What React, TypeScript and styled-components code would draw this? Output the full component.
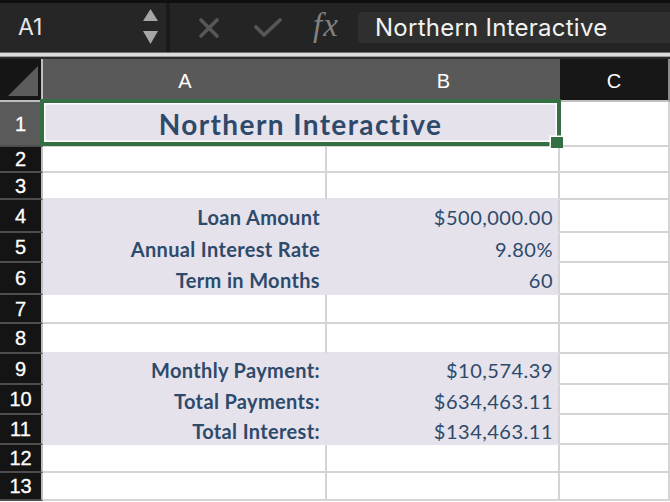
import React from "react";
import styled, { createGlobalStyle } from "styled-components";

type Row = {
  n: number;
  height: number;
  label?: string;
  value?: string;
  filled?: boolean;
};

const rows: Row[] = [
  { n: 1, height: 45, filled: true },
  { n: 2, height: 26 },
  { n: 3, height: 27 },
  { n: 4, height: 33, label: "Loan Amount", value: "$500,000.00", filled: true },
  { n: 5, height: 30, label: "Annual Interest Rate", value: "9.80%", filled: true },
  { n: 6, height: 32, label: "Term in Months", value: "60", filled: true },
  { n: 7, height: 29 },
  { n: 8, height: 30 },
  { n: 9, height: 31, label: "Monthly Payment:", value: "$10,574.39", filled: true },
  { n: 10, height: 30, label: "Total Payments:", value: "$634,463.11", filled: true },
  { n: 11, height: 30, label: "Total Interest:", value: "$134,463.11", filled: true },
  { n: 12, height: 28 },
  { n: 13, height: 28 }
];

const FILL = "#e5e2ec";
const GRID = "#d4d4d4";
const GREEN = "#346e43";
const INK = "#2e4a6b";

const GlobalStyle = createGlobalStyle`
  *, *::before, *::after { box-sizing: border-box; }
  html, body { margin: 0; padding: 0; background: #fff; }
  body { font-family: "Liberation Sans", Arial, sans-serif; }
`;

const Window = styled.div`
  width: 670px;
  height: 502px;
  overflow: hidden;
  display: flex;
  flex-direction: column;
  background: #fff;
`;

const FormulaBar = styled.div`
  height: 52px;
  border-top: 3px solid #0f0f0f;
  background: #242424;
  display: flex;
  align-items: center;
`;

const NameBox = styled.div`
  width: 166px;
  height: 100%;
  display: flex;
  align-items: center;
  justify-content: space-between;
  padding: 0 8px 0 18px;
  background: #262626;
`;

const CellRef = styled.span`
  font-family: Inter, "Liberation Sans", sans-serif;
  font-size: 23px;
  color: #e6e6e6;
  margin-top: -1px;
`;

const Stepper = styled.div`
  display: flex;
  flex-direction: column;
  gap: 10px;
  margin-top: -2px;
`;

const Divider = styled.div`
  width: 4px;
  align-self: stretch;
  background: #1a1a1a;
`;

const ToolIcon = styled.span<{ $left: number }>`
  display: flex;
  align-items: center;
  margin-left: ${p => p.$left}px;
`;

const Fx = styled.span`
  width: 30px;
  margin-left: 31px;
  font-family: "Liberation Serif", "DejaVu Serif", serif;
  font-style: italic;
  font-size: 33px;
  letter-spacing: 1px;
  color: #808080;
  margin-top: -4px;
  white-space: nowrap;
`;

const FormulaField = styled.div`
  flex: 1;
  height: 31px;
  margin-left: 15px;
  display: flex;
  align-items: center;
  padding-left: 17px;
  background: #2f2f2f;
  border-radius: 4px 0 0 4px;
  font-family: Inter, "Liberation Sans", sans-serif;
  font-size: 24px;
  letter-spacing: 0.25px;
  color: #f2f2f2;
  white-space: nowrap;
`;

const Separator = styled.div`
  height: 7px;
  background: linear-gradient(
    to bottom,
    #6f6f6f 0 1px,
    #dcdcdc 1px 4px,
    #9d9d9d 4px 5px,
    #2b2b2b 5px 7px
  );
`;

const Sheet = styled.div<{ $rows: string }>`
  display: grid;
  grid-template-columns: 43px 284px 233px 110px;
  grid-template-rows: 43px ${p => p.$rows};
`;

const Corner = styled.div`
  background: #151515;
  border-right: 2px solid #bdbdbd;
  border-bottom: 2px solid #bdbdbd;
  display: flex;
  align-items: flex-end;
  justify-content: flex-end;
  padding: 0 3px 4px 0;
`;

const ColHead = styled.div<{ $selected?: boolean }>`
  background: ${p => (p.$selected ? "#595959" : "#171717")};
  border-bottom: 2px solid #c0c0c0;
  border-right: ${p => (p.$selected ? "none" : "2px solid #8c8c8c")};
  display: flex;
  align-items: center;
  justify-content: center;
  padding-top: 3px;
  color: #fff;
  font-size: 20px;
`;

const RowHead = styled.div<{ $selected?: boolean }>`
  background: ${p => (p.$selected ? "#5a5a5a" : "#141414")};
  border-right: 2px solid #bdbdbd;
  border-bottom: 2px solid #4d4d4d;
  display: flex;
  align-items: center;
  justify-content: center;
  color: #fff;
  font-size: 20px;
  padding-top: 1px;
  -webkit-text-stroke: 0.3px #fff;
`;

const Cell = styled.div<{ $fill?: boolean; $right: string; $bottom: string; $bold?: boolean }>`
  background: ${p => (p.$fill ? FILL : "#fff")};
  border-right: 2px solid ${p => p.$right};
  border-bottom: 2px solid ${p => p.$bottom};
  display: flex;
  align-items: center;
  justify-content: flex-end;
  padding: 3px 5px 0 0;
  font-family: Lato, "Open Sans", sans-serif;
  font-size: 20px;
  font-weight: ${p => (p.$bold ? 700 : 400)};
  letter-spacing: ${p => (p.$bold ? 0.35 : 0.5)}px;
  color: ${INK};
  white-space: nowrap;
`;

const TitleCell = styled.div`
  grid-column: span 2;
  position: relative;
  background: ${FILL};
  border-right: 2px solid ${GRID};
  border-bottom: 2px solid ${GRID};
  display: flex;
  align-items: center;
  justify-content: center;
  padding-top: 1px;
  font-family: Lato, "Open Sans", sans-serif;
  font-size: 28px;
  font-weight: 700;
  letter-spacing: 1.4px;
  color: ${INK};
  white-space: nowrap;
`;

const SelectionFrame = styled.div`
  position: absolute;
  top: -3px;
  left: -3px;
  right: -3px;
  bottom: -1px;
  border: 4px solid ${GREEN};
  box-shadow: inset 0 0 0 1.5px #fff;
  pointer-events: none;
`;

const FillHandle = styled.div`
  position: absolute;
  right: -5px;
  bottom: -3px;
  width: 12px;
  height: 11px;
  background: ${GREEN};
  box-shadow: -1.5px -1.5px 0 0 #fff;
`;

const App: React.FC = () => {
  const edge = (i: number) => (rows[i].filled || (rows[i + 1] && rows[i + 1].filled) ? FILL : GRID);

  return (
    <Window>
      <GlobalStyle />
      <FormulaBar>
        <NameBox>
          <CellRef>A1</CellRef>
          <Stepper>
            <svg width="15" height="12" viewBox="0 0 15 12">
              <polygon points="7.5,0 15,12 0,12" fill="#a6a6a6" />
            </svg>
            <svg width="15" height="13" viewBox="0 0 15 13">
              <polygon points="0,0 15,0 7.5,13" fill="#a6a6a6" />
            </svg>
          </Stepper>
        </NameBox>
        <Divider />
        <ToolIcon $left={28}>
          <svg width="22" height="20" viewBox="0 0 22 20">
            <path d="M3 2 L19 18 M19 2 L3 18" stroke="#575757" strokeWidth="3.6" strokeLinecap="round" />
          </svg>
        </ToolIcon>
        <ToolIcon $left={34}>
          <svg width="28" height="20" viewBox="0 0 28 20">
            <path d="M2 9 L10 17 L26 2" stroke="#575757" strokeWidth="3.6" fill="none" strokeLinecap="round" strokeLinejoin="round" />
          </svg>
        </ToolIcon>
        <Fx>fx</Fx>
        <FormulaField>Northern Interactive</FormulaField>
      </FormulaBar>
      <Separator />
      <Sheet $rows={rows.map(r => `${r.height}px`).join(" ")}>
        <Corner>
          <svg width="30" height="30" viewBox="0 0 30 30">
            <polygon points="30,0 30,30 0,30" fill="#5c5c5c" />
          </svg>
        </Corner>
        <ColHead $selected>A</ColHead>
        <ColHead $selected>B</ColHead>
        <ColHead>C</ColHead>
        {rows.map((r, i) => (
          <React.Fragment key={r.n}>
            <RowHead $selected={r.n === 1}>{r.n}</RowHead>
            {r.n === 1 ? (
              <TitleCell>
                Northern Interactive
                <SelectionFrame />
                <FillHandle />
              </TitleCell>
            ) : (
              <>
                <Cell $fill={r.filled} $right={r.filled ? FILL : GRID} $bottom={edge(i)} $bold>
                  {r.label}
                </Cell>
                <Cell $fill={r.filled} $right={GRID} $bottom={edge(i)}>
                  {r.value}
                </Cell>
              </>
            )}
            <Cell $right={GRID} $bottom={GRID} />
          </React.Fragment>
        ))}
      </Sheet>
    </Window>
  );
};

export default App;
